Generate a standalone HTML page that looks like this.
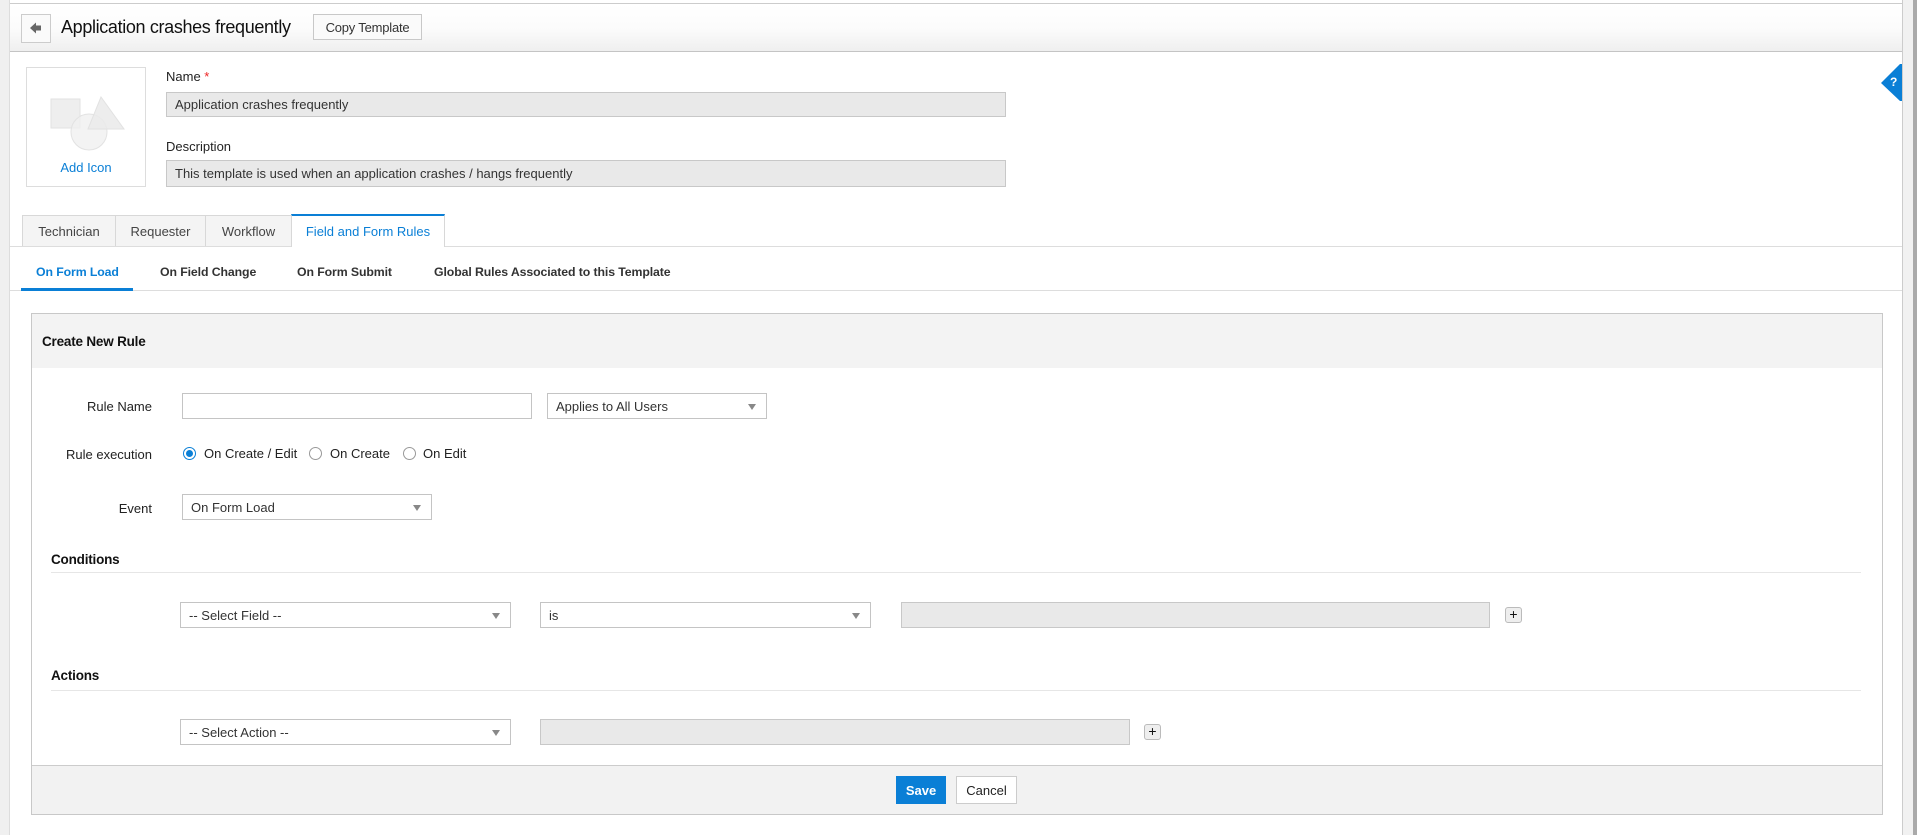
<!DOCTYPE html>
<html><head><meta charset="utf-8"><style>
*{box-sizing:border-box;margin:0;padding:0}
body{width:1917px;height:835px;position:relative;overflow:hidden;background:#fff;font-family:"Liberation Sans",Arial,sans-serif;color:#222}
.a{position:absolute}
.inp{position:absolute;border:1px solid #c4c4c4;background:#fff;font-size:13px;color:#333;padding-left:8px;display:flex;align-items:center}
.gray{background:#e9e9e9;border-color:#c8c8c8}
.sel::after{content:"";position:absolute;right:10px;top:50%;margin-top:-2px;border-left:4px solid transparent;border-right:4px solid transparent;border-top:6px solid #888}
.lbl{position:absolute;font-size:13px;color:#222;text-align:right;width:140px}
.tab{position:absolute;top:215px;height:31px;border:1px solid #d8d8d8;border-bottom:none;background:#f4f4f4;font-size:13px;color:#444;display:flex;align-items:center;justify-content:center}
.st{position:absolute;top:265px;font-size:12.3px;font-weight:bold;color:#333;letter-spacing:-0.1px}
.radio{position:absolute;width:13px;height:13px;border:1px solid #999;border-radius:50%;background:#fff}
.rl{position:absolute;font-size:13px;color:#222}
.plus{position:absolute;width:17px;height:16px;border:1px solid #bbb;border-radius:3px;background:#eee;font-size:14px;line-height:13px;text-align:center;color:#111}
h4{position:absolute;font-size:13.5px;font-weight:bold;color:#111;letter-spacing:-0.2px}
</style></head><body>
<div class="a" style="left:0;top:0;width:10px;height:835px;background:#f0f0f0;border-right:1px solid #ddd"></div>
<div class="a" style="left:1902px;top:0;width:11px;height:835px;background:#f1f1f1;border-left:1px solid #ccc"></div>
<div class="a" style="left:1913px;top:0;width:4px;height:835px;background:#aaa"></div>
<div class="a" style="left:10px;top:3px;width:1892px;height:49px;background:linear-gradient(#fff 0%,#fcfcfc 50%,#efefef 100%);border-top:1px solid #ccc;border-bottom:1px solid #c4c4c4"></div>
<div class="a" style="left:21px;top:14px;width:30px;height:29px;border:1px solid #ccc;background:#fafafa"></div>
<svg class="a" style="left:29px;top:21px" width="14" height="14" viewBox="0 0 14 14"><path d="M1 7 L7 1.5 L7 4.5 L12 4.5 L12 9.5 L7 9.5 L7 12.5 Z" fill="#666"/></svg>
<div class="a" style="left:61px;top:17px;font-size:18px;letter-spacing:-0.35px;color:#111">Application crashes frequently</div>
<div class="a" style="left:313px;top:14px;width:109px;height:26px;border:1px solid #c8c8c8;background:#fafafa;font-size:13px;color:#333;display:flex;align-items:center;justify-content:center;letter-spacing:-0.2px">Copy Template</div>
<svg class="a" style="left:1880px;top:64px" width="22" height="37" viewBox="0 0 22 37"><path d="M22 0 L22 37 L20 37 L1 19 L20 0 Z" fill="#0a7fd6"/><text x="10" y="22" font-size="12" font-weight="bold" fill="#fff" font-family="Liberation Sans">?</text></svg>
<div class="a" style="left:26px;top:67px;width:120px;height:120px;border:1px solid #ddd"></div>
<svg class="a" style="left:26px;top:67px" width="120" height="90"><rect x="25" y="32" width="29" height="29" fill="#eee" stroke="#e2e2e2"/><circle cx="63" cy="65" r="18" fill="#f0f0f0" fill-opacity=".8" stroke="#e2e2e2"/><path d="M75 30 L62 62 L98 62 Z" fill="#eaeaea" fill-opacity=".85" stroke="#e2e2e2"/></svg>
<div class="a" style="left:26px;top:160px;width:120px;text-align:center;font-size:13px;color:#0a7fd6">Add Icon</div>
<div class="a" style="left:166px;top:69px;font-size:13px">Name <span style="color:#e22">*</span></div>
<div class="inp gray" style="left:166px;top:92px;width:840px;height:25px">Application crashes frequently</div>
<div class="a" style="left:166px;top:139px;font-size:13px">Description</div>
<div class="inp gray" style="left:166px;top:160px;width:840px;height:27px">This template is used when an application crashes / hangs frequently</div>
<div class="a" style="left:10px;top:246px;width:1892px;height:1px;background:#ddd"></div>
<div class="tab" style="left:22px;width:94px">Technician</div>
<div class="tab" style="left:115px;width:91px">Requester</div>
<div class="tab" style="left:205px;width:87px">Workflow</div>
<div class="tab" style="left:291px;width:154px;top:214px;height:33px;background:#fff;border-top:2px solid #0a7fd6;color:#0a7fd6">Field and Form Rules</div>
<div class="st" style="left:36px;color:#0a7fd6">On Form Load</div>
<div class="st" style="left:160px">On Field Change</div>
<div class="st" style="left:297px">On Form Submit</div>
<div class="st" style="left:434px">Global Rules Associated to this Template</div>
<div class="a" style="left:10px;top:290px;width:1892px;height:1px;background:#ddd"></div>
<div class="a" style="left:21px;top:288px;width:112px;height:3px;background:#0a7fd6"></div>
<div class="a" style="left:31px;top:313px;width:1852px;height:502px;border:1px solid #c8c8c8;background:#fff"></div>
<div class="a" style="left:32px;top:314px;width:1850px;height:54px;background:#f3f3f3"></div>
<h4 style="left:42px;top:334px">Create New Rule</h4>
<div class="lbl" style="left:12px;top:399px">Rule Name</div>
<div class="inp" style="left:182px;top:393px;width:350px;height:26px"></div>
<div class="inp sel" style="left:547px;top:393px;width:220px;height:26px">Applies to All Users</div>
<div class="lbl" style="left:12px;top:447px">Rule execution</div>
<div class="radio" style="left:183px;top:447px;border-color:#0a7fd6"><div style="position:absolute;left:2px;top:2px;width:7px;height:7px;border-radius:50%;background:#0a7fd6"></div></div>
<div class="rl" style="left:204px;top:446px">On Create / Edit</div>
<div class="radio" style="left:309px;top:447px"></div>
<div class="rl" style="left:330px;top:446px">On Create</div>
<div class="radio" style="left:403px;top:447px"></div>
<div class="rl" style="left:423px;top:446px">On Edit</div>
<div class="lbl" style="left:12px;top:501px">Event</div>
<div class="inp sel" style="left:182px;top:494px;width:250px;height:26px">On Form Load</div>
<h4 style="left:51px;top:552px">Conditions</h4>
<div class="a" style="left:51px;top:572px;width:1810px;height:1px;background:#e6e6e6"></div>
<div class="inp sel" style="left:180px;top:602px;width:331px;height:26px">-- Select Field --</div>
<div class="inp sel" style="left:540px;top:602px;width:331px;height:26px">is</div>
<div class="inp gray" style="left:901px;top:602px;width:589px;height:26px"></div>
<div class="plus" style="left:1505px;top:607px">+</div>
<h4 style="left:51px;top:668px">Actions</h4>
<div class="a" style="left:51px;top:690px;width:1810px;height:1px;background:#e6e6e6"></div>
<div class="inp sel" style="left:180px;top:719px;width:331px;height:26px">-- Select Action --</div>
<div class="inp gray" style="left:540px;top:719px;width:590px;height:26px"></div>
<div class="plus" style="left:1144px;top:724px">+</div>
<div class="a" style="left:32px;top:765px;width:1850px;height:49px;background:#f2f2f2;border-top:1px solid #ccc"></div>
<div class="a" style="left:896px;top:776px;width:50px;height:28px;background:#0a7fd6;color:#fff;font-size:13px;font-weight:bold;display:flex;align-items:center;justify-content:center">Save</div>
<div class="a" style="left:956px;top:776px;width:61px;height:28px;background:#fff;border:1px solid #ccc;color:#222;font-size:13px;display:flex;align-items:center;justify-content:center">Cancel</div>
</body></html>
